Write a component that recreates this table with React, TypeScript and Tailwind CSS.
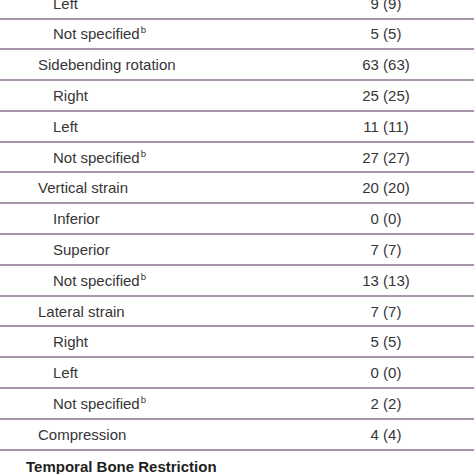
import React from "react";

type Row = { label: string; value: string; level: 1 | 2; sup?: boolean };

const rows: Row[] = [
  { label: "Left", value: "9 (9)", level: 2 },
  { label: "Not specified", value: "5 (5)", level: 2, sup: true },
  { label: "Sidebending rotation", value: "63 (63)", level: 1 },
  { label: "Right", value: "25 (25)", level: 2 },
  { label: "Left", value: "11 (11)", level: 2 },
  { label: "Not specified", value: "27 (27)", level: 2, sup: true },
  { label: "Vertical strain", value: "20 (20)", level: 1 },
  { label: "Inferior", value: "0 (0)", level: 2 },
  { label: "Superior", value: "7 (7)", level: 2 },
  { label: "Not specified", value: "13 (13)", level: 2, sup: true },
  { label: "Lateral strain", value: "7 (7)", level: 1 },
  { label: "Right", value: "5 (5)", level: 2 },
  { label: "Left", value: "0 (0)", level: 2 },
  { label: "Not specified", value: "2 (2)", level: 2, sup: true },
  { label: "Compression", value: "4 (4)", level: 1 },
];

export default function App() {
  return (
    <div
      className="w-[474px] h-[474px] overflow-hidden bg-white text-[#363636]"
      style={{ fontFamily: '"Liberation Sans", Arial, sans-serif' }}
    >
      <div className="-mt-[11.3px]">
        {rows.map((r, i) => (
          <div
            key={i}
            className="flex h-[30.8px] items-center border-b-2 border-[#a894ab] text-[15px] leading-none"
          >
            <div className={"w-[298px] " + (r.level === 1 ? "pl-[38px]" : "pl-[53px]")}>
              {r.label}
              {r.sup && (
                <span className="inline-block align-top text-[9.5px] leading-none ml-[1px] -mt-[1px]">b</span>
              )}
            </div>
            <div className="flex-1 text-center">{r.value}</div>
          </div>
        ))}
        <div className="flex h-[30.8px] items-center pl-[26px] text-[15px] font-bold text-[#1f1f1f] leading-none">
          Temporal Bone Restriction
        </div>
      </div>
    </div>
  );
}
